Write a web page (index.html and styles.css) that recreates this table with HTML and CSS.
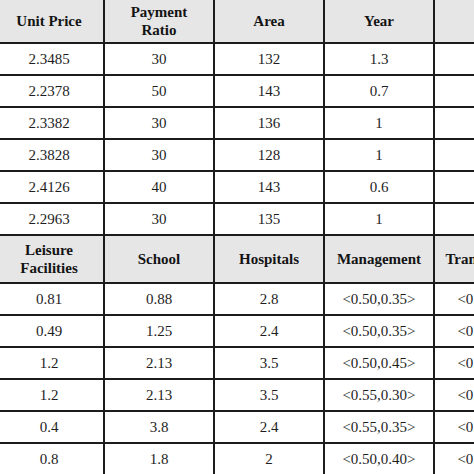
FILE: index.html
```html
<!DOCTYPE html>
<html>
<head>
<meta charset="utf-8">
<link rel="stylesheet" href="styles.css">
</head>
<body>
<div class="frame">
<table class="data">
  <colgroup>
    <col class="c"><col class="c"><col class="c"><col class="c"><col class="c-last">
  </colgroup>
  <tr class="head">
    <th>Unit Price</th><th>Payment<br>Ratio</th><th>Area</th><th>Year</th><th></th>
  </tr>
  <tr><td>2.3485</td><td>30</td><td>132</td><td>1.3</td><td></td></tr>
  <tr><td>2.2378</td><td>50</td><td>143</td><td>0.7</td><td></td></tr>
  <tr><td>2.3382</td><td>30</td><td>136</td><td>1</td><td></td></tr>
  <tr><td>2.3828</td><td>30</td><td>128</td><td>1</td><td></td></tr>
  <tr><td>2.4126</td><td>40</td><td>143</td><td>0.6</td><td></td></tr>
  <tr><td>2.2963</td><td>30</td><td>135</td><td>1</td><td></td></tr>
  <tr class="head tall">
    <th>Leisure<br>Facilities</th><th>School</th><th>Hospitals</th><th>Management</th><th>Transportation</th>
  </tr>
  <tr><td>0.81</td><td>0.88</td><td>2.8</td><td>&lt;0.50,0.35&gt;</td><td>&lt;0.60,0.30&gt;</td></tr>
  <tr><td>0.49</td><td>1.25</td><td>2.4</td><td>&lt;0.50,0.35&gt;</td><td>&lt;0.55,0.35&gt;</td></tr>
  <tr><td>1.2</td><td>2.13</td><td>3.5</td><td>&lt;0.50,0.45&gt;</td><td>&lt;0.60,0.30&gt;</td></tr>
  <tr><td>1.2</td><td>2.13</td><td>3.5</td><td>&lt;0.55,0.30&gt;</td><td>&lt;0.50,0.40&gt;</td></tr>
  <tr><td>0.4</td><td>3.8</td><td>2.4</td><td>&lt;0.55,0.35&gt;</td><td>&lt;0.55,0.30&gt;</td></tr>
  <tr><td>0.8</td><td>1.8</td><td>2</td><td>&lt;0.50,0.40&gt;</td><td>&lt;0.60,0.35&gt;</td></tr>
</table>
</div>
</body>
</html>
```
FILE: styles.css
```css
html, body {
  margin: 0;
  padding: 0;
  background: #ffffff;
}
body {
  width: 474px;
  height: 474px;
  overflow: hidden;
}
.frame {
  width: 474px;
  height: 474px;
  overflow: hidden;
}
.data {
  margin-left: -5px;
  width: 560px;
  table-layout: fixed;
  border-collapse: separate;
  border-spacing: 0;
  font-family: "Liberation Serif", "Times New Roman", serif;
  font-size: 15px;
  color: #1e1e1e;
}
.data col.c {
  width: 110px;
}
.data col.c-last {
  width: 120px;
}
.data td, .data th {
  height: 30px;
  padding: 0;
  text-align: center;
  vertical-align: middle;
  white-space: nowrap;
  border-right: 2px solid #1c1c1c;
  border-bottom: 2px solid #1c1c1c;
  line-height: 18px;
}
.data .head th {
  background: #e6e6e7;
  font-weight: bold;
  color: #141414;
  height: 42px;
}
.data .head.tall th {
  height: 46px;
}
```
